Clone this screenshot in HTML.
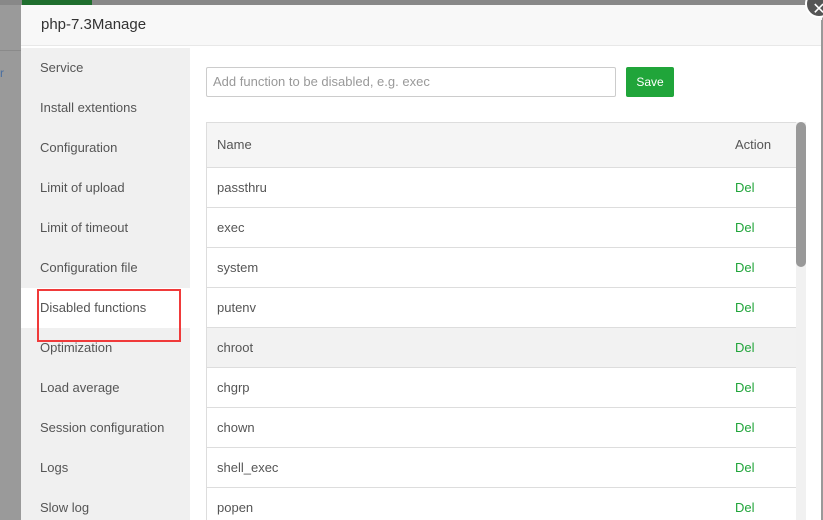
<!DOCTYPE html>
<html><head><meta charset="utf-8"><style>
*{margin:0;padding:0;box-sizing:border-box}
html,body{width:823px;height:520px;overflow:hidden}
body{background:#9a9a9a;font-family:"Liberation Sans",sans-serif;position:relative;font-size:13px;color:#555}
.abs{position:absolute}
.side div{height:40px;line-height:40px;padding-left:19px;color:#555;font-size:13px}
.row{position:absolute;left:207px;width:589px;height:40px;border-bottom:1px solid #ddd;line-height:39px;font-size:13px;color:#555}
.row span{position:absolute;left:10px}
.row b{position:absolute;left:528px;font-weight:normal;color:#20a53a}
</style></head><body>
<div class="abs" style="left:0;top:0;width:823px;height:5px;background:#888"></div>
<div class="abs" style="left:22px;top:0;width:70px;height:5px;background:#1f6e2e"></div>
<div class="abs" style="left:0;top:50px;width:21px;height:1px;background:#8a8a8a"></div>
<div class="abs" style="left:0;top:66px;color:#4a6fa0;font-size:12px">r</div>
<div class="abs" style="left:21px;top:5px;width:801px;height:515px;background:#fff"></div>
<div class="abs" style="left:21px;top:5px;width:801px;height:41px;background:#f8f8f8;border-bottom:1px solid #e8e8e8"></div>
<div class="abs" style="left:41px;top:16px;font-size:15px;color:#333">php-7.3Manage</div>
<div class="abs side" style="left:21px;top:48px;width:169px;height:472px;background:#f0f0f0">
<div>Service</div><div>Install extentions</div><div>Configuration</div><div>Limit of upload</div><div>Limit of timeout</div><div>Configuration file</div><div style="background:#fff">Disabled functions</div><div>Optimization</div><div>Load average</div><div>Session configuration</div><div>Logs</div><div>Slow log</div>
</div>
<div class="abs" style="left:37px;top:289px;width:144px;height:53px;border:2px solid #f03a3a"></div>
<div class="abs" style="left:206px;top:67px;width:410px;height:30px;border:1px solid #ccc;border-radius:2px;color:#999;line-height:28px;padding-left:6px;font-size:13px">Add function to be disabled, e.g. exec</div>
<div class="abs" style="left:626px;top:67px;width:48px;height:30px;background:#20a53a;border-radius:2px;color:#fff;line-height:30px;text-align:center;font-size:12px">Save</div>
<div class="abs" style="left:206px;top:122px;width:591px;height:398px;border:1px solid #ddd;border-bottom:none"></div>
<div class="row" style="top:123px;height:45px;line-height:44px;background:#f5f5f5"><span>Name</span><b style="color:#555">Action</b></div>
<div class="row" style="top:168px"><span>passthru</span><b>Del</b></div>
<div class="row" style="top:208px"><span>exec</span><b>Del</b></div>
<div class="row" style="top:248px"><span>system</span><b>Del</b></div>
<div class="row" style="top:288px"><span>putenv</span><b>Del</b></div>
<div class="row" style="top:328px;background:#f2f2f2"><span>chroot</span><b>Del</b></div>
<div class="row" style="top:368px"><span>chgrp</span><b>Del</b></div>
<div class="row" style="top:408px"><span>chown</span><b>Del</b></div>
<div class="row" style="top:448px"><span>shell_exec</span><b>Del</b></div>
<div class="row" style="top:488px;height:32px;border-bottom:none"><span>popen</span><b>Del</b></div>
<div class="abs" style="left:796px;top:122px;width:10px;height:398px;background:#f1f1f1"></div>
<div class="abs" style="left:796px;top:122px;width:10px;height:145px;background:#999;border-radius:5px"></div>
<div class="abs" style="left:821px;top:20px;width:2px;height:500px;background:#999"></div>
<div class="abs" style="left:805px;top:-10px;width:28px;height:28px;border-radius:50%;background:#555;border:2px solid #fff;color:#fff;font-size:16px;line-height:24px;text-align:center;padding-top:6px">✕</div>
</body></html>
